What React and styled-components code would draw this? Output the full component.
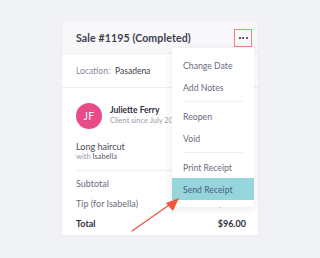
import React from 'react';
import styled, { createGlobalStyle } from 'styled-components';

const Global = createGlobalStyle`
  body {
    margin: 0;
    background: #f1f2f6;
    font-family: Lato, "Open Sans", sans-serif;
    -webkit-font-smoothing: antialiased;
  }
`;

const Page = styled.div`
  position: relative;
  width: 320px;
  height: 258px;
  padding: 22px 62px 0;
  box-sizing: border-box;
  overflow: hidden;
`;

const Card = styled.div`
  position: relative;
  width: 196px;
  background: #fff;
  box-shadow: 0 1px 2px rgba(40, 40, 70, 0.04);
`;

const Header = styled.div`
  height: 31px;
  display: flex;
  align-items: center;
  justify-content: space-between;
  padding: 0 6px 0 14px;
  background: #f8f8fa;
  border-bottom: 1px solid #eeeff3;
`;

const Title = styled.div`
  font-size: 10.6px;
  font-weight: 700;
  color: #3e3e50;
  letter-spacing: 0.1px;
`;

const DotsButton = styled.div`
  width: 16px;
  height: 16px;
  border: 1px solid #f2877d;
  display: flex;
  align-items: center;
  justify-content: center;
  gap: 1.5px;
  margin-top: 1px;
`;

const Dot = styled.span`
  width: 2px;
  height: 2px;
  border-radius: 50%;
  background: #2d2d3d;
`;

const LocationRow = styled.div`
  height: 33px;
  display: flex;
  align-items: center;
  padding: 0 14px;
  font-size: 8.5px;
  border-bottom: 1px solid #eeeff3;
`;

const Muted = styled.span`
  color: #8a8a9c;
  margin-right: 5px;
`;

const Dark = styled.span`
  color: #3b3b4c;
`;

const Body = styled.div`
  padding: 15px 12px 2px 14px;
`;

const Client = styled.div`
  display: flex;
  align-items: center;
  gap: 8px;
`;

const Avatar = styled.div`
  width: 26px;
  height: 26px;
  border-radius: 50%;
  background: #e84b8a;
  color: #fff;
  font-size: 10.5px;
  display: flex;
  align-items: center;
  justify-content: center;
  letter-spacing: 0.3px;
`;

const ClientInfo = styled.div`
  display: flex;
  flex-direction: column;
  margin-top: -2px;
`;

const Name = styled.div`
  font-size: 8.5px;
  line-height: 11px;
  font-weight: 700;
  color: #2f2f40;
`;

const Small = styled.div`
  font-size: 7.5px;
  line-height: 10px;
  color: #9a9aaa;
  white-space: nowrap;
`;

const Service = styled.div`
  margin-top: 12px;
  padding-bottom: 8px;
  border-bottom: 1px solid #eeeff3;
`;

const ServiceName = styled.div`
  font-size: 9px;
  line-height: 11px;
  color: #4a4a5c;
`;

const Strong = styled.span`
  color: #5a5a6c;
`;

const Lines = styled.div`
  padding-top: 2px;
`;

const Line = styled.div`
  height: 20px;
  display: flex;
  align-items: center;
  justify-content: space-between;
  font-size: 9px;
  color: ${(p) => (p.$total ? '#2f2f40' : '#6b6b7e')};
  font-weight: ${(p) => (p.$total ? 700 : 400)};
`;

const Menu = styled.div`
  position: absolute;
  left: 110px;
  top: 26px;
  width: 82px;
  padding: 6px 0 7px;
  background: #fff;
  box-shadow: 0 2px 8px rgba(40, 40, 70, 0.1);
`;

const Item = styled.div`
  height: 22px;
  display: flex;
  align-items: center;
  padding: 0 11px;
  font-size: 8.7px;
  white-space: nowrap;
  color: ${(p) => (p.$active ? '#4a5f86' : '#6b6b80')};
  background: ${(p) => (p.$active ? '#96d5dc' : 'transparent')};
`;

const Divider = styled.div`
  height: 1px;
  margin: 3px 11px;
  background: #eeeff3;
`;

const Arrow = styled.svg`
  position: absolute;
  left: 0;
  top: 0;
  pointer-events: none;
`;

export default function App() {
  return (
    <>
      <Global />
      <Page>
        <Card>
          <Header>
            <Title>Sale #1195 (Completed)</Title>
            <DotsButton>
              <Dot />
              <Dot />
              <Dot />
            </DotsButton>
          </Header>
          <LocationRow>
            <Muted>Location:</Muted>
            <Dark>Pasadena</Dark>
          </LocationRow>
          <Body>
            <Client>
              <Avatar>JF</Avatar>
              <ClientInfo>
                <Name>Juliette Ferry</Name>
                <Small>Client since July 2021</Small>
              </ClientInfo>
            </Client>
            <Service>
              <ServiceName>Long haircut</ServiceName>
              <Small>
                with <Strong>Isabella</Strong>
              </Small>
            </Service>
            <Lines>
              <Line>
                <span>Subtotal</span>
                <span>$80.00</span>
              </Line>
              <Line>
                <span>Tip (for Isabella)</span>
                <span>$16.00</span>
              </Line>
              <Line $total>
                <span>Total</span>
                <span>$96.00</span>
              </Line>
            </Lines>
          </Body>
          <Menu>
            <Item>Change Date</Item>
            <Item>Add Notes</Item>
            <Divider />
            <Item>Reopen</Item>
            <Item>Void</Item>
            <Divider />
            <Item>Print Receipt</Item>
            <Item $active>Send Receipt</Item>
          </Menu>
        </Card>
        <Arrow width="320" height="258" viewBox="0 0 320 258">
          <line x1="132" y1="231" x2="172" y2="203" stroke="#f2553b" strokeWidth="1.3" strokeLinecap="round" />
          <polygon points="179,198 166,203 173,211" fill="#f2553b" />
        </Arrow>
      </Page>
    </>
  );
}
